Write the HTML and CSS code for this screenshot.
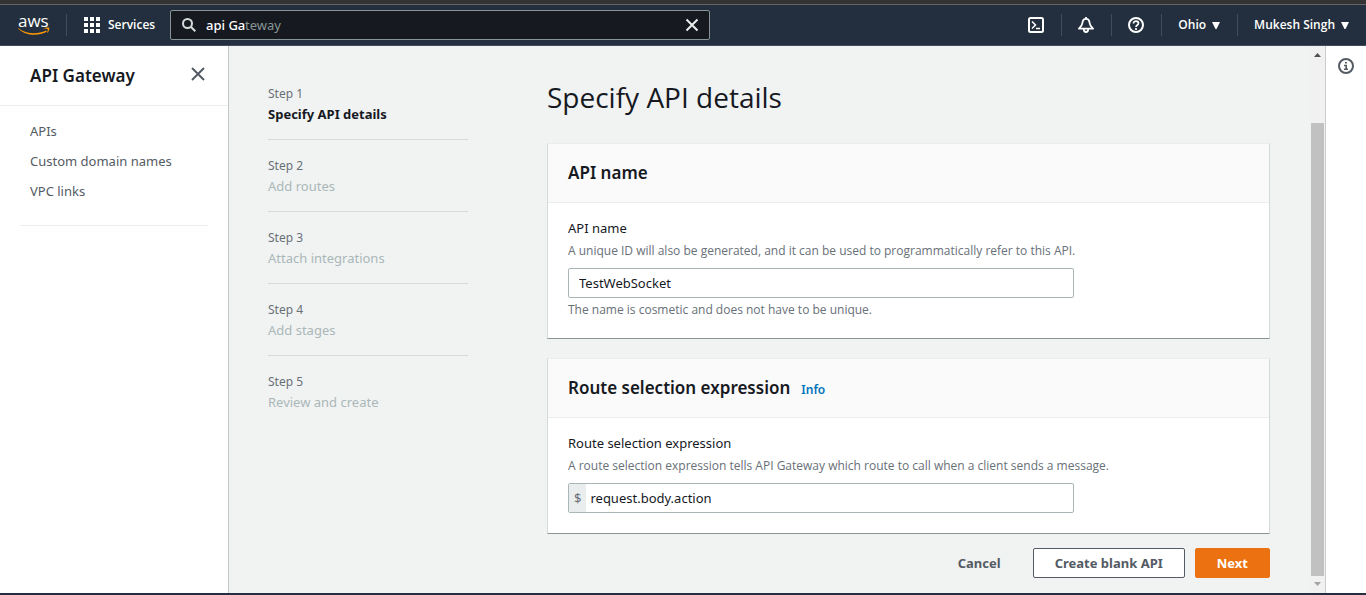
FILE: index.html
```
<!DOCTYPE html>
<html lang="en">
<head>
    <meta charset="utf-8">
    <title>API Gateway</title>
    <link rel="stylesheet" href="styles.css">
</head>
<body>
    <header class="navbar">
        <a class="logo" href="#" aria-label="aws">
            <span class="logo-text">aws</span>
            <svg class="logo-smile" width="32" height="9" viewBox="0 0 32 9">
                <path d="M.3 1.2C8 7.2 19.500 7.800 28 3.600l.8 1.200C20 9.400 7.500 8.800.1 1.700z" fill="#f90"/>
                <path d="M25.300 1.500C28 .2 30.500.2 31.200.7c.5.8-.3 4-2.200 5.600.5-1.800 1-3.500.6-4.300-.6-.5-2.400-.5-4.300-.5z" fill="#f90"/>
            </svg>
        </a>
        <button class="services">
            <svg width="16" height="16" viewBox="0 0 16 16" fill="#fff">
                <path d="M0 0h4v4H0zM6 0h4v4H6zM12 0h4v4h-4zM0 6h4v4H0zM6 6h4v4H6zM12 6h4v4h-4zM0 12h4v4H0zM6 12h4v4H6zM12 12h4v4h-4z"/>
            </svg>
            Services
        </button>
        <div class="search">
            <svg width="14" height="14" viewBox="0 0 14 14" fill="none" stroke="#d5dbdb" stroke-width="2">
                <circle cx="5.500" cy="5.500" r="4.500"/>
                <path d="M8.800 8.800L13.300 13.300"/>
            </svg>
            <div class="search-field">
                <input class="search-input" type="text" value="api Ga" aria-label="Search">
                <span class="search-rest">teway</span>
            </div>
            <button class="icon-button" aria-label="Clear search">
                <svg width="14" height="14" viewBox="0 0 14 14" stroke="#eaeded" stroke-width="2">
                    <path d="M1.500 1.500l11 11M12.500 1.500l-11 11"/>
                </svg>
            </button>
        </div>
        <nav class="nav-items">
            <button class="nav-item" aria-label="CloudShell">
                <svg width="16" height="16" viewBox="0 0 16 16" fill="none" stroke="#fff" stroke-width="2">
                    <rect x="1" y="1" width="14" height="14" rx="1.500"/>
                    <path d="M4 4.500L7.500 8 4 11.500M8 11.500h4" stroke-width="1.500"/>
                </svg>
            </button>
            <button class="nav-item" aria-label="Notifications">
                <svg width="16" height="16" viewBox="0 0 16 16" fill="none" stroke="#fff" stroke-width="1.800" stroke-linejoin="round">
                    <path d="M8 0v2M8 1.800C5.800 1.800 4.600 3.500 4.400 6c-.2 2.300-1.200 3.600-3.400 5.700h14c-2.200-2.100-3.200-3.400-3.400-5.700C11.400 3.500 10.200 1.800 8 1.800z"/>
                    <path d="M5.800 12c0 4 4.400 4 4.400 0"/>
                </svg>
            </button>
            <button class="nav-item" aria-label="Help">
                <svg width="16" height="16" viewBox="0 0 16 16" fill="none" stroke="#fff" stroke-width="2">
                    <circle cx="8" cy="8" r="7"/>
                    <path d="M5.500 6.500c0-3.300 5-3.200 5 0C10.500 8 8 8 8 10M8 11v2" stroke-width="1.700"/>
                </svg>
            </button>
            <button class="nav-item">Ohio
                <svg width="8" height="7" viewBox="0 0 8 7"><path d="M0 0h8L4.500 7h-1z" fill="#fff"/></svg>
            </button>
            <button class="nav-item">Mukesh Singh
                <svg width="8" height="7" viewBox="0 0 8 7"><path d="M0 0h8L4.500 7h-1z" fill="#fff"/></svg>
            </button>
        </nav>
    </header>

    <div class="layout">
        <aside class="sidebar">
            <div class="sidebar-header">
                <h2>API Gateway</h2>
                <button class="icon-button" aria-label="Close navigation">
                    <svg width="14" height="14" viewBox="0 0 14 14" stroke="#545b64" stroke-width="2">
                        <path d="M1 1l12 12M13 1L1 13"/>
                    </svg>
                </button>
            </div>
            <nav class="sidebar-links">
                <a href="#">APIs</a>
                <a href="#">Custom domain names</a>
                <a href="#">VPC links</a>
            </nav>
        </aside>

        <main class="content">
            <ol class="steps">
                <li class="step active"><small>Step 1</small><span>Specify API details</span></li>
                <li class="step"><small>Step 2</small><span>Add routes</span></li>
                <li class="step"><small>Step 3</small><span>Attach integrations</span></li>
                <li class="step"><small>Step 4</small><span>Add stages</span></li>
                <li class="step"><small>Step 5</small><span>Review and create</span></li>
            </ol>

            <form class="wizard">
                <h1>Specify API details</h1>

                <section class="card">
                    <div class="card-header">
                        <h2>API name</h2>
                    </div>
                    <div class="card-body">
                        <label for="apiName">API name</label>
                        <p class="description">A unique ID will also be generated, and it can be used to programmatically refer to this API.</p>
                        <div class="field">
                            <input id="apiName" type="text" value="TestWebSocket">
                        </div>
                        <p class="hint">The name is cosmetic and does not have to be unique.</p>
                    </div>
                </section>

                <section class="card">
                    <div class="card-header">
                        <h2>Route selection expression</h2>
                        <a class="info" href="#">Info</a>
                    </div>
                    <div class="card-body">
                        <label for="routeExpression">Route selection expression</label>
                        <p class="description">A route selection expression tells API Gateway which route to call when a client sends a message.</p>
                        <div class="field with-prefix">
                            <span class="prefix">$</span>
                            <input id="routeExpression" type="text" value="request.body.action">
                        </div>
                    </div>
                </section>

                <div class="actions">
                    <button class="button link" type="button">Cancel</button>
                    <button class="button" type="button">Create blank API</button>
                    <button class="button primary" type="button">Next</button>
                </div>
            </form>
        </main>

        <div class="scrollbar">
            <svg width="7" height="4" viewBox="0 0 7 4"><path d="M0 4l3.500-4L7 4z" fill="#505050"/></svg>
            <div class="track"><div class="thumb"></div></div>
            <svg width="7" height="4" viewBox="0 0 7 4"><path d="M0 0l3.500 4L7 0z" fill="#a3a3a3"/></svg>
        </div>

        <aside class="tools">
            <button class="icon-button" aria-label="Open help panel">
                <svg width="16" height="16" viewBox="0 0 16 16" fill="none" stroke="#545b64" stroke-width="2">
                    <circle cx="8" cy="8" r="7"/>
                    <path d="M7 4.800h2M6 7.500h2.200V11M6 11.300h4" stroke-width="1.600"/>
                </svg>
            </button>
        </aside>
    </div>
</body>
</html>
```
FILE: styles.css
```
* {
    box-sizing: border-box;
}

body {
    display: flex;
    flex-direction: column;
    min-height: 100vh;
    margin: 0;
    border-top: 4px solid #333;
    border-bottom: 2px solid #232f3e;
    font-family: "Noto Sans", sans-serif;
    font-size: 13px;
    line-height: 20px;
    color: #16191f;
}

h1, h2, p {
    margin: 0;
}

h2 {
    font-size: 17px;
    line-height: 22px;
    font-weight: 600;
}

a {
    color: inherit;
    text-decoration: none;
}

button, input {
    font: inherit;
    color: inherit;
}

button {
    padding: 0;
    border: 0;
    background: none;
}

svg {
    display: block;
    flex-shrink: 0;
}

/* top navigation */
.navbar {
    display: flex;
    align-items: center;
    height: 42px;
    border-top: 1px solid #666;
    border-bottom: 1px solid #414d5c;
    background: #232f3e;
    color: #fff;
    font-family: "Open Sans", sans-serif;
    font-size: 12px;
    font-weight: 600;
}

.logo {
    width: 67px;
    height: 22px;
    padding-left: 18px;
    border-right: 1px solid #414d5c;
}

.logo-text {
    display: block;
    font-size: 17px;
    line-height: 13px;
    font-weight: 500;
}

.services {
    display: flex;
    align-items: center;
    gap: 8px;
    width: 103px;
    padding-left: 17px;
}

.search {
    display: flex;
    align-items: center;
    gap: 10px;
    width: 540px;
    height: 30px;
    padding: 0 10px 0 11px;
    border: 1px solid #879596;
    border-radius: 2px;
    background: #16191f;
    font-family: "Noto Sans", sans-serif;
    font-size: 13px;
    font-weight: 500;
}

.search-field {
    display: flex;
    flex: 1;
}

.search-input {
    width: 39px;
    padding: 0;
    border: 0;
    outline: 0;
    background: none;
}

.search-rest {
    color: #879596;
    font-weight: 400;
}

.nav-items {
    display: flex;
    margin-left: auto;
}

.nav-item {
    display: flex;
    align-items: center;
    gap: 6px;
    height: 22px;
    padding: 0 17px 0 16px;
    border-left: 1px solid #414d5c;
}

.nav-item:first-child {
    border-left: 0;
}

/* page layout */
.layout {
    display: flex;
    flex: 1;
}

.sidebar {
    width: 229px;
    border-right: 1px solid #c2c8ca;
}

.sidebar-header {
    display: flex;
    align-items: flex-start;
    justify-content: space-between;
    height: 60px;
    padding: 19px 23px 0 30px;
    border-bottom: 1px solid #eaeded;
}

.sidebar-header .icon-button {
    padding-top: 2px;
}

.sidebar-links {
    display: flex;
    flex-direction: column;
    gap: 10px;
    margin: 0 20px;
    padding: 15px 10px 24px;
    border-bottom: 1px solid #eaeded;
    color: #545b64;
}

.content {
    display: flex;
    flex: 1;
    gap: 79px;
    padding: 35px 39px 15px;
    background: #f1f3f3;
}

.steps {
    width: 200px;
    margin: 0;
    padding: 0;
    list-style: none;
}

.step {
    display: flex;
    flex-direction: column;
    height: 72px;
    padding-top: 3px;
    color: #aab7b8;
}

.step + .step {
    padding-top: 16px;
    border-top: 1px solid #d5dbdb;
}

.step.active {
    height: 58px;
    color: #16191f;
    font-weight: 700;
}

.step small {
    color: #687078;
    font-size: 12px;
    font-weight: 400;
}

.wizard {
    flex: 1;
}

.wizard h1 {
    margin-bottom: 30px;
    font-family: "Open Sans", sans-serif;
    font-size: 28px;
    line-height: 32px;
    font-weight: 400;
}

/* cards */
.card {
    margin-bottom: 19px;
    border: 1px solid #d5dbdb;
    border-top-color: #eaeded;
    border-bottom-color: #879596;
    background: #fff;
}

.card-header {
    display: flex;
    align-items: baseline;
    gap: 11px;
    padding: 18px 20px;
    border-bottom: 1px solid #eaeded;
    background: #fafafa;
}

.info {
    color: #0073bb;
    font-size: 12px;
    line-height: 16px;
    font-weight: 600;
}

.card-body {
    padding: 15px 20px 20px;
}

.card-body label {
    display: block;
}

.description, .hint {
    color: #687078;
    font-family: "Open Sans", sans-serif;
    font-size: 12px;
    line-height: 16px;
}

.description {
    margin: 5px 0 9px;
}

.hint {
    margin-top: 4px;
}

.field {
    display: flex;
    max-width: 506px;
    height: 30px;
    border: 1px solid #aab7b8;
    border-radius: 2px;
}

.field input {
    flex: 1;
    padding: 0 10px;
    border: 0;
    outline: 0;
    background: none;
}

.with-prefix input {
    padding-left: 4px;
}

.prefix {
    padding: 4px 5px;
    background: #eaeded;
    color: #687078;
}

.actions {
    display: flex;
    justify-content: flex-end;
    gap: 10px;
    margin-top: -5px;
}

.button {
    height: 30px;
    padding: 0 21px;
    border: 1px solid #545b64;
    border-radius: 2px;
    background: #fff;
    color: #545b64;
    font-weight: 700;
}

.button.link {
    border-color: transparent;
    background: none;
}

.button.primary {
    border-color: #ec7211;
    background: #ec7211;
    color: #fff;
}

.scrollbar {
    display: flex;
    flex-direction: column;
    align-items: center;
    width: 16px;
    padding: 7px 0;
    background: #f1f1f1;
}

.track {
    flex: 1;
    width: 13px;
    margin: 6px 0;
}

.thumb {
    height: 100%;
    border-top: 60px solid #f1f1f1;
    background: #c1c1c1;
}

.tools {
    width: 41px;
    padding: 12px 12px;
    border-left: 1px solid #ccc;
}
```
